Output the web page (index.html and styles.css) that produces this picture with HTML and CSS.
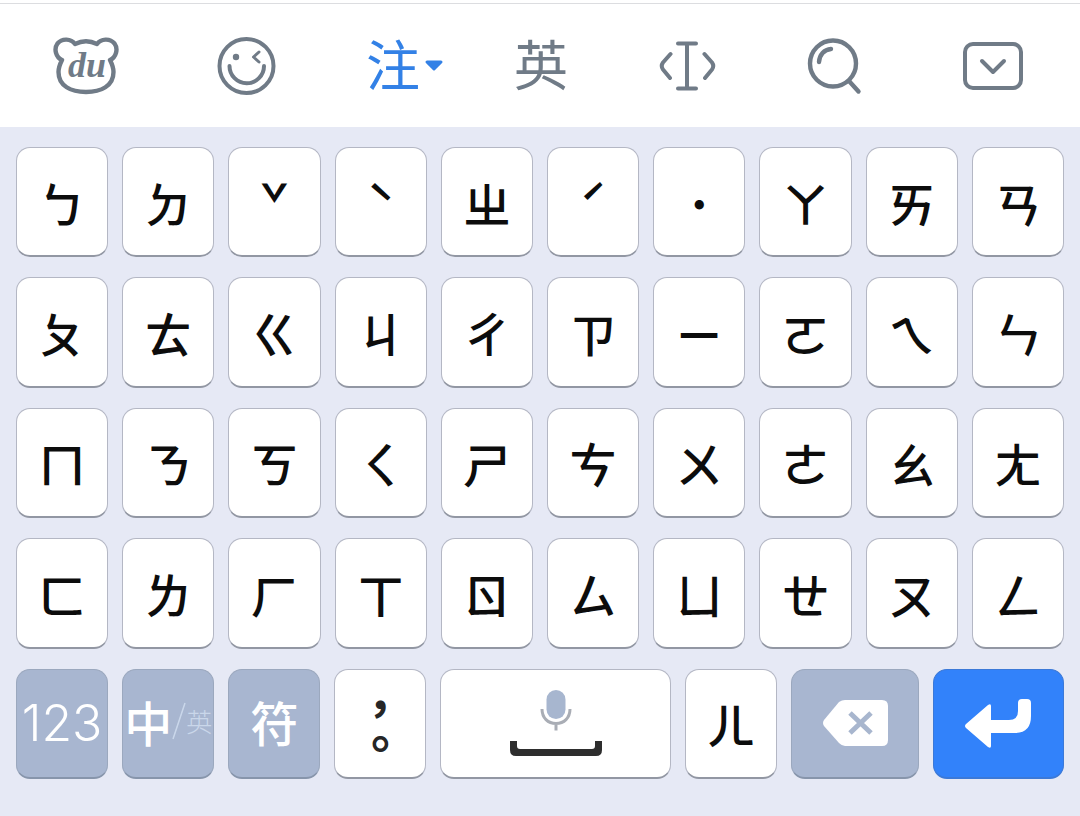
FILE: index.html
```html
<!DOCTYPE html>
<html lang="zh-Hant">
<head>
<meta charset="utf-8">
<meta name="viewport" content="width=device-width, initial-scale=1">
<title>注音鍵盤</title>
<link rel="stylesheet" href="styles.css">
</head>
<body>
<div class="ime">
  <div class="toolbar" role="toolbar" aria-label="工具列">
    <button class="tool" type="button" aria-label="百度">
      <svg width="66" height="60" viewBox="0 0 66 60" fill="none" stroke="currentColor" stroke-width="4.4" stroke-linejoin="round">
        <path d="M22 8C29 4.500 37 4.500 44 8C48 2.500 57 2 61.500 7.500C65.500 13 63 21.500 57 24C59 28 60.500 31 60.500 36C60.500 50 48 56 33 56C18 56 5.500 50 5.500 36C5.500 31 7 28 9 24C3 21.500 .500 13 4.500 7.500C9 2 18 2.500 22 8Z"/>
        <text class="logo-text" x="34" y="41" text-anchor="middle">du</text>
      </svg>
    </button>
    <button class="tool" type="button" aria-label="表情">
      <svg width="60" height="60" viewBox="0 0 60 60" fill="none" stroke="currentColor" stroke-width="4" stroke-linecap="round" stroke-linejoin="round">
        <circle cx="30.500" cy="30" r="27"/>
        <circle cx="20" cy="21" r="3.200" fill="currentColor" stroke="none"/>
        <path d="M43 16L37.500 21L43 26" stroke-width="3"/>
        <path d="M13.500 30A17.200 17.200 0 0 0 48 30"/>
      </svg>
    </button>
    <button class="tool tool-active" type="button">
      <span class="tool-text">注</span>
      <svg width="20" height="12" viewBox="0 0 20 12"><path d="M3 2H17L10 9Z" fill="currentColor" stroke="currentColor" stroke-width="3" stroke-linejoin="round"/></svg>
    </button>
    <button class="tool" type="button"><span class="tool-text">英</span></button>
    <button class="tool" type="button" aria-label="移動游標">
      <svg width="58" height="52" viewBox="0 0 58 52" fill="none" stroke="currentColor" stroke-width="4" stroke-linecap="round">
        <path d="M20 3.500H38M20 48.500H38M29 3.500V48.500"/>
        <path d="M12.500 14L5 22.500Q2.500 26 5 29.500L12 38M46.500 14L54 22.500Q56.500 26 54 29.500L47 38" stroke-linejoin="round"/>
      </svg>
    </button>
    <button class="tool" type="button" aria-label="搜尋">
      <svg width="56" height="60" viewBox="0 0 56 60" fill="none" stroke="currentColor" stroke-width="4.4" stroke-linecap="round">
        <circle cx="27" cy="27.500" r="23"/>
        <path d="M13 26C13.500 19 18 13.500 25 13M43 45L52.500 55.500"/>
      </svg>
    </button>
    <button class="tool" type="button" aria-label="收起鍵盤">
      <svg width="60" height="50" viewBox="0 0 60 50" fill="none" stroke="currentColor" stroke-width="4" stroke-linecap="round" stroke-linejoin="round">
        <rect x="2" y="3" width="56" height="44" rx="8"/>
        <path d="M19 20L30 31L41 20"/>
      </svg>
    </button>
  </div>

  <div class="keyboard">
    <div class="row">
      <button class="key" type="button">ㄅ</button><button class="key" type="button">ㄉ</button><button class="key" type="button">ˇ</button><button class="key" type="button">ˋ</button><button class="key" type="button">ㄓ</button><button class="key" type="button">ˊ</button><button class="key" type="button">˙</button><button class="key" type="button">ㄚ</button><button class="key" type="button">ㄞ</button><button class="key" type="button">ㄢ</button>
    </div>
    <div class="row">
      <button class="key" type="button">ㄆ</button><button class="key" type="button">ㄊ</button><button class="key" type="button">ㄍ</button><button class="key" type="button">ㄐ</button><button class="key" type="button">ㄔ</button><button class="key" type="button">ㄗ</button><button class="key" type="button">ㄧ</button><button class="key" type="button">ㄛ</button><button class="key" type="button">ㄟ</button><button class="key" type="button">ㄣ</button>
    </div>
    <div class="row">
      <button class="key" type="button">ㄇ</button><button class="key" type="button">ㄋ</button><button class="key" type="button">ㄎ</button><button class="key" type="button">ㄑ</button><button class="key" type="button">ㄕ</button><button class="key" type="button">ㄘ</button><button class="key" type="button">ㄨ</button><button class="key" type="button">ㄜ</button><button class="key" type="button">ㄠ</button><button class="key" type="button">ㄤ</button>
    </div>
    <div class="row">
      <button class="key" type="button">ㄈ</button><button class="key" type="button">ㄌ</button><button class="key" type="button">ㄏ</button><button class="key" type="button">ㄒ</button><button class="key" type="button">ㄖ</button><button class="key" type="button">ㄙ</button><button class="key" type="button">ㄩ</button><button class="key" type="button">ㄝ</button><button class="key" type="button">ㄡ</button><button class="key" type="button">ㄥ</button>
    </div>
    <div class="row row-bottom">
      <button class="key key-fn key-num" type="button">123</button>
      <button class="key key-fn key-text" type="button"><span>中</span><span class="alt"><svg width="14" height="38" viewBox="0 0 14 38"><path d="M13 1L1 37" stroke="currentColor" stroke-width="1.500"/></svg>英</span></button>
      <button class="key key-fn key-text" type="button">符</button>
      <button class="key key-punct" type="button">，。</button>
      <button class="key key-space" type="button" aria-label="空白鍵">
        <svg width="32" height="42" viewBox="0 0 32 42" fill="none">
          <rect x="6.500" y="1" width="19" height="29" rx="9.500" fill="#a7b6cf"/>
          <path d="M2 20C2 29 8 34.500 16 34.500S30 29 30 20M16 34.500V41.500" stroke="#a9adb5" stroke-width="3"/>
        </svg>
        <svg width="92" height="16" viewBox="0 0 92 16"><path d="M0 0H7V5Q7 8 10 8H82Q85 8 85 5V0H92V9Q92 15 86 15H6Q0 15 0 9Z" fill="#2e2e2e"/></svg>
      </button>
      <button class="key" type="button">ㄦ</button>
      <button class="key key-fn" type="button" aria-label="刪除">
        <svg width="66" height="48" viewBox="0 0 66 48">
          <path d="M17 3Q20 1 23 1H60Q66 1 66 7V41Q66 47 60 47H23Q20 47 17 44L2 27Q0 24 2 21Z" fill="#fff"/>
          <path d="M28 14L49 34M49 14L28 34" stroke="#a8b6ce" stroke-width="5"/>
        </svg>
      </button>
      <button class="key key-enter" type="button" aria-label="換行">
        <svg width="68" height="52" viewBox="0 0 68 52" fill="#fff">
          <path d="M24 8Q27 6 27 9V23H45Q54 23 54 14V6Q54 2 58 2H63Q67 2 67 6V19Q67 36 51 36H27V49Q27 52 24 50L2 31Q0 29 2 27Z"/>
        </svg>
      </button>
    </div>
  </div>
</div>
</body>
</html>
```
FILE: styles.css
```css
* { box-sizing: border-box; }

body {
  margin: 0;
  background: #e6e9f5;
  font-family: "Noto Sans CJK TC", "Noto Sans CJK SC", sans-serif;
}

button {
  margin: 0;
  padding: 0;
  border: 0;
  background: none;
  color: inherit;
  font: inherit;
  cursor: pointer;
}

svg { display: block; flex: none; }

.ime {
  display: flex;
  flex-direction: column;
  min-height: 100vh;
  padding-top: 3px;
  background: #fff;
}

.toolbar {
  display: grid;
  grid-template-columns: 132fr 188fr 130fr 142fr 150fr 144fr 174fr;
  height: 124px;
  padding-left: 20px;
  border-top: 1px solid #dcdde0;
  color: #707b87;
}

.tool {
  display: flex;
  align-items: center;
  justify-content: center;
  gap: 4px;
  font-size: 54px;
  line-height: 60px;
}

.tool-text { padding-bottom: 6px; }

.tool-active { color: #3381e6; }

.logo-text {
  fill: currentColor;
  stroke: none;
  font: italic bold 36px "Liberation Serif", serif;
}

.keyboard {
  flex: 1;
  display: grid;
  grid-template-rows: repeat(5, 1fr);
  gap: 20px;
  padding: 20px 16px 37px;
  background: #e6e9f5;
}

.row {
  display: grid;
  grid-template-columns: repeat(10, 1fr);
  gap: 14px;
}

.row-bottom {
  grid-template-columns: 92fr 92fr 92fr 92fr 230fr 92fr 128fr 131fr;
}

.key {
  display: flex;
  align-items: center;
  justify-content: center;
  min-width: 0;
  border: 1px solid #b4b7c4;
  border-bottom: 2px solid #9297a3;
  border-radius: 14px;
  background: #fff;
  color: #0c0c0c;
  font-size: 48px;
  font-weight: 500;
  line-height: 60px;
}

.key-fn {
  border-color: #9ba8be;
  border-bottom-color: #8795ab;
  background: #a8b6d0;
  color: #fff;
}

.key-text { padding-bottom: 4px; }

.key-num {
  font-family: Inter, "Liberation Sans", sans-serif;
  font-size: 50px;
  font-weight: 300;
}

.alt {
  display: flex;
  align-items: center;
  color: #cad7ea;
  font-size: 26px;
  font-weight: 300;
}

.key-punct {
  padding: 0 20px;
  color: #262626;
  font-weight: 700;
  line-height: 36px;
  word-break: break-all;
  line-break: anywhere;
}

.key-space {
  flex-direction: column;
  gap: 10px;
}

.key-enter {
  border-color: #3b79d8;
  background: #3282fa;
}
```
